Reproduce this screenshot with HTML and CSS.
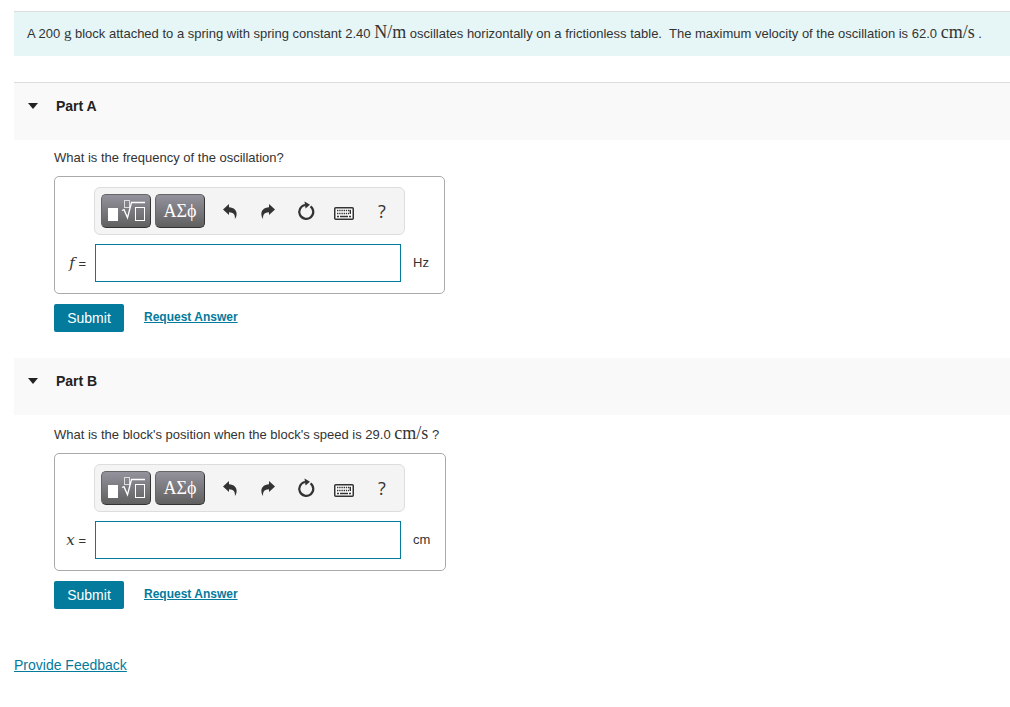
FILE: index.html
```html
<!DOCTYPE html>
<html lang="en">
<head>
    <meta charset="UTF-8">
    <title>Oscillation of a Block</title>
    <link rel="stylesheet" href="styles.css">
</head>
<body>
    <!-- icons shared by both answer toolbars -->
    <svg class="icon-defs" aria-hidden="true">
        <symbol id="icon-root" viewBox="0 0 38 24">
            <rect x="1" y="9" width="10" height="13" fill="#fff"/>
            <rect x="17.5" y="1.5" width="5" height="7" fill="none" stroke="#ddd"/>
            <path d="M15 11.500l2-.8 3.500 8L24.500 3.500H38" fill="none" stroke="#fff" stroke-width="1.300"/>
            <rect x="28.500" y="8.500" width="9" height="13" fill="none" stroke="#fff"/>
        </symbol>
        <symbol id="icon-undo" viewBox="0 0 14 15">
            <path d="M0 5.500L6 0v3.200c5 .2 8 3.200 7.600 7.300-.1 1.700-.7 3.300-1.700 4.500.5-4.300-1.400-6.600-5.900-6.800V11z" fill="#333"/>
        </symbol>
        <symbol id="icon-reset" viewBox="0 0 18 20">
            <path d="M13.500 5.300a7 7 0 1 1-5.500-1.300" fill="none" stroke="#333" stroke-width="2.200"/>
            <path d="M7.500 .5l5.500 3.300-4.500 3.700z" fill="#333"/>
        </symbol>
        <symbol id="icon-keyboard" viewBox="0 0 20 13">
            <rect x=".75" y=".75" width="18.500" height="11.500" rx="1" fill="#fff" stroke="#333" stroke-width="1.500"/>
            <path d="M3 3.500h14M3 6.500h12" stroke="#333" stroke-width="1.400" stroke-dasharray="1.400 .8"/>
            <path d="M3 9.500h2M6 9.500h8M15 9.500h2M16.300 3v4" stroke="#333" stroke-width="1.400"/>
        </symbol>
    </svg>

    <div class="intro">
        A 200 <span class="gram">g</span> block attached to a spring with spring constant 2.40 <span class="math">N/m</span> oscillates horizontally on a frictionless table.&nbsp; The maximum velocity of the oscillation is 62.0 <span class="math">cm/s</span> .
    </div>

    <section class="part">
        <h2 class="part-header part-header-first"><span class="arrow"></span>Part A</h2>
        <form class="part-body">
            <p class="question">What is the frequency of the oscillation?</p>
            <div class="answer-box">
                <div class="toolbar">
                    <button type="button" class="palette" aria-label="Templates"><svg width="38" height="24"><use href="#icon-root"/></svg></button>
                    <button type="button" class="palette">ΑΣϕ</button>
                    <div class="tools">
                        <button type="button" class="tool" aria-label="Undo"><svg width="14" height="15"><use href="#icon-undo"/></svg></button>
                        <button type="button" class="tool" aria-label="Redo"><svg class="flip" width="14" height="15"><use href="#icon-undo"/></svg></button>
                        <button type="button" class="tool" aria-label="Reset"><svg width="18" height="20"><use href="#icon-reset"/></svg></button>
                        <button type="button" class="tool" aria-label="Keyboard"><svg class="keyboard" width="20" height="13"><use href="#icon-keyboard"/></svg></button>
                        <button type="button" class="tool">?</button>
                    </div>
                </div>
                <div class="answer-row">
                    <label for="answerA"><i>f</i> =</label>
                    <input type="text" id="answerA" class="answer">
                    <span>Hz</span>
                </div>
            </div>
            <div class="actions">
                <button type="submit" class="submit">Submit</button>
                <a href="#" class="request">Request Answer</a>
            </div>
        </form>
    </section>

    <section class="part">
        <h2 class="part-header"><span class="arrow"></span>Part B</h2>
        <form class="part-body">
            <p class="question">What is the block's position when the block's speed is 29.0 <span class="math">cm/s</span> ?</p>
            <div class="answer-box">
                <div class="toolbar">
                    <button type="button" class="palette" aria-label="Templates"><svg width="38" height="24"><use href="#icon-root"/></svg></button>
                    <button type="button" class="palette">ΑΣϕ</button>
                    <div class="tools">
                        <button type="button" class="tool" aria-label="Undo"><svg width="14" height="15"><use href="#icon-undo"/></svg></button>
                        <button type="button" class="tool" aria-label="Redo"><svg class="flip" width="14" height="15"><use href="#icon-undo"/></svg></button>
                        <button type="button" class="tool" aria-label="Reset"><svg width="18" height="20"><use href="#icon-reset"/></svg></button>
                        <button type="button" class="tool" aria-label="Keyboard"><svg class="keyboard" width="20" height="13"><use href="#icon-keyboard"/></svg></button>
                        <button type="button" class="tool">?</button>
                    </div>
                </div>
                <div class="answer-row">
                    <label for="answerB"><i>x</i> =</label>
                    <input type="text" id="answerB" class="answer">
                    <span>cm</span>
                </div>
            </div>
            <div class="actions">
                <button type="submit" class="submit">Submit</button>
                <a href="#" class="request">Request Answer</a>
            </div>
        </form>
    </section>

    <a href="#" class="feedback">Provide Feedback</a>
</body>
</html>
```
FILE: styles.css
```css
* {
    box-sizing: border-box;
}

body {
    margin: 0;
    padding: 11px 0 0 14px;
    font-family: "Liberation Sans", Arial, sans-serif;
    font-size: 13px;
    line-height: 20px;
    color: #333;
    background-color: #fff;
}

a {
    color: #047a9c;
}

button {
    font-family: inherit;
    padding: 0;
    border: none;
    cursor: pointer;
}

.icon-defs {
    display: none;
}

.intro {
    padding: 10px 13px 12px;
    margin-bottom: 26px;
    border-top: 1px solid #ddd;
    background-color: #e6f6f7;
}

.math,
.gram {
    font-family: "Liberation Serif", serif;
    font-size: 18px;
}

.gram {
    font-size: 15px;
}

.part {
    margin-bottom: 26px;
}

.part-header {
    display: flex;
    align-items: center;
    height: 57px;
    margin: 0;
    padding: 0 14px 12px;
    background-color: #f9f9f9;
    color: #222;
    font-size: 14px;
}

.part-header-first {
    height: 58px;
    border-top: 1px solid #ddd;
}

.arrow {
    margin-right: 18px;
    border: 5px solid transparent;
    border-top: 6px solid #222;
    border-bottom: 0;
}

.part-body {
    padding-left: 40px;
}

.question {
    margin: 0;
    padding: 8px 0;
}

.answer-box {
    width: fit-content;
    padding: 10px 15px 11px 10px;
    border: 1px solid #aaa;
    border-radius: 5px;
}

.toolbar {
    display: flex;
    gap: 4px;
    width: fit-content;
    margin: 0 0 9px 29px;
    padding: 6px 3px 6px 6px;
    border: 1px solid #ddd;
    border-radius: 6px;
    background-color: #f4f4f4;
}

.palette {
    display: flex;
    align-items: center;
    justify-content: center;
    width: 50px;
    height: 34px;
    border: 1px solid #333;
    border-top-color: #666;
    border-left-color: #666;
    border-radius: 5px;
    background: linear-gradient(#94929c, #606060);
    color: #fff;
    font-family: "Liberation Serif", serif;
    font-size: 18px;
}

.tools {
    display: flex;
    margin-left: 2px;
}

.tool {
    display: flex;
    align-items: center;
    justify-content: center;
    width: 38px;
    background: none;
    color: #333;
    font-family: "Open Sans", sans-serif;
    font-size: 18px;
}

.flip {
    transform: scaleX(-1);
}

.keyboard {
    margin-top: 4px;
}

.answer-row {
    display: flex;
    align-items: center;
}

.answer-row label {
    width: 30px;
    padding-right: 9px;
    text-align: right;
    white-space: nowrap;
}

.answer-row i {
    font-family: "DejaVu Serif", serif;
    font-size: 15px;
}

.answer {
    width: 306px;
    height: 38px;
    margin-right: 12px;
    padding: 0 8px;
    border: 1px solid #047a9c;
    font-size: 16px;
}

.actions {
    display: flex;
    align-items: center;
    gap: 20px;
    margin-top: 10px;
}

.submit {
    width: 70px;
    height: 28px;
    border-radius: 2px;
    background-color: #047a9c;
    color: #fff;
    font-size: 14px;
}

.request {
    padding-bottom: 2px;
    font-size: 12px;
    font-weight: bold;
}

.feedback {
    display: inline-block;
    margin-top: 20px;
    font-size: 14px;
}
```
